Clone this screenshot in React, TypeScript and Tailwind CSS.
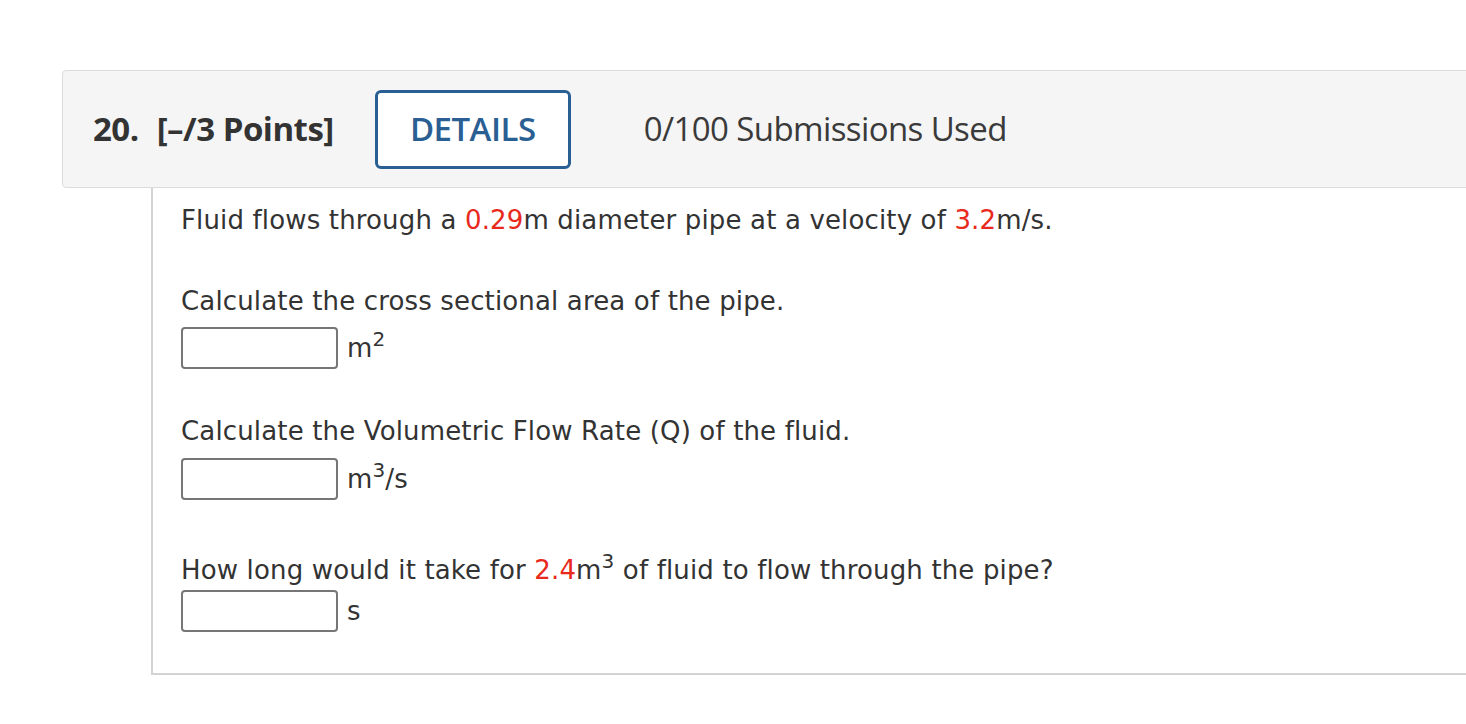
const body = { fontFamily: '"DejaVu Sans", Verdana, sans-serif' };
const head = { fontFamily: '"Open Sans", "Noto Sans", sans-serif' };

const Red = ({ children }: { children: React.ReactNode }) => (
  <span className="text-[#e8291c]">{children}</span>
);

const Sup = ({ children }: { children: React.ReactNode }) => (
  <sup className="text-[20px] leading-none top-[-11px]">{children}</sup>
);

const AnswerRow = ({ unit }: { unit: React.ReactNode }) => (
  <div className="flex items-center gap-[9px]">
    <input
      type="text"
      className="w-[157px] h-[42px] rounded-[4px] border-2 border-[#767676] bg-white"
    />
    <span className="text-[26px] leading-[32px] text-[#333]">{unit}</span>
  </div>
);

export default function App() {
  return (
    <div className="w-[1466px] h-[724px] bg-white overflow-hidden pt-[70px] pl-[62px]">
      <div
        style={head}
        className="h-[118px] w-[1420px] flex items-center bg-[#f5f5f5] border border-[#dcdcdc] rounded-l-[4px] pl-[30px]"
      >
        <span className="text-[33px] font-bold text-[#333] tracking-[-0.5px]">20.</span>
        <span className="ml-[18px] text-[33px] font-bold text-[#333] tracking-[-0.5px]">[–/3 Points]</span>
        <div className="ml-[41px] w-[196px] h-[79px] flex items-center justify-center border-[3px] border-[#2a5f94] rounded-[6px] bg-white">
          <span className="text-[33px] font-semibold text-[#2a5f94] tracking-[-0.5px]">DETAILS</span>
        </div>
        <span className="ml-[73px] text-[33px] text-[#3a3a3a] tracking-[-0.6px]">0/100 Submissions Used</span>
      </div>
      <div
        style={body}
        className="ml-[89px] w-[1400px] h-[487px] border-l-2 border-b-2 border-[#d3d3d3] pl-[28px] pt-[16px] text-[#333] text-[26px] tracking-[0.15px]"
      >
        <p className="leading-[32px]">
          Fluid flows through a <Red>0.29</Red>m diameter pipe at a velocity of <Red>3.2</Red>m/s.
        </p>
        <p className="mt-[49px] leading-[32px]">Calculate the cross sectional area of the pipe.</p>
        <div className="mt-[10px]">
          <AnswerRow unit={<>m<Sup>2</Sup></>} />
        </div>
        <p className="mt-[46px] leading-[32px]">Calculate the Volumetric Flow Rate (Q) of the fluid.</p>
        <div className="mt-[11px]">
          <AnswerRow unit={<>m<Sup>3</Sup>/s</>} />
        </div>
        <p className="mt-[54px] leading-[32px]">
          How long would it take for <Red>2.4</Red>m<Sup>3</Sup> of fluid to flow through the pipe?
        </p>
        <div className="mt-[4px]">
          <AnswerRow unit="s" />
        </div>
      </div>
    </div>
  );
}
